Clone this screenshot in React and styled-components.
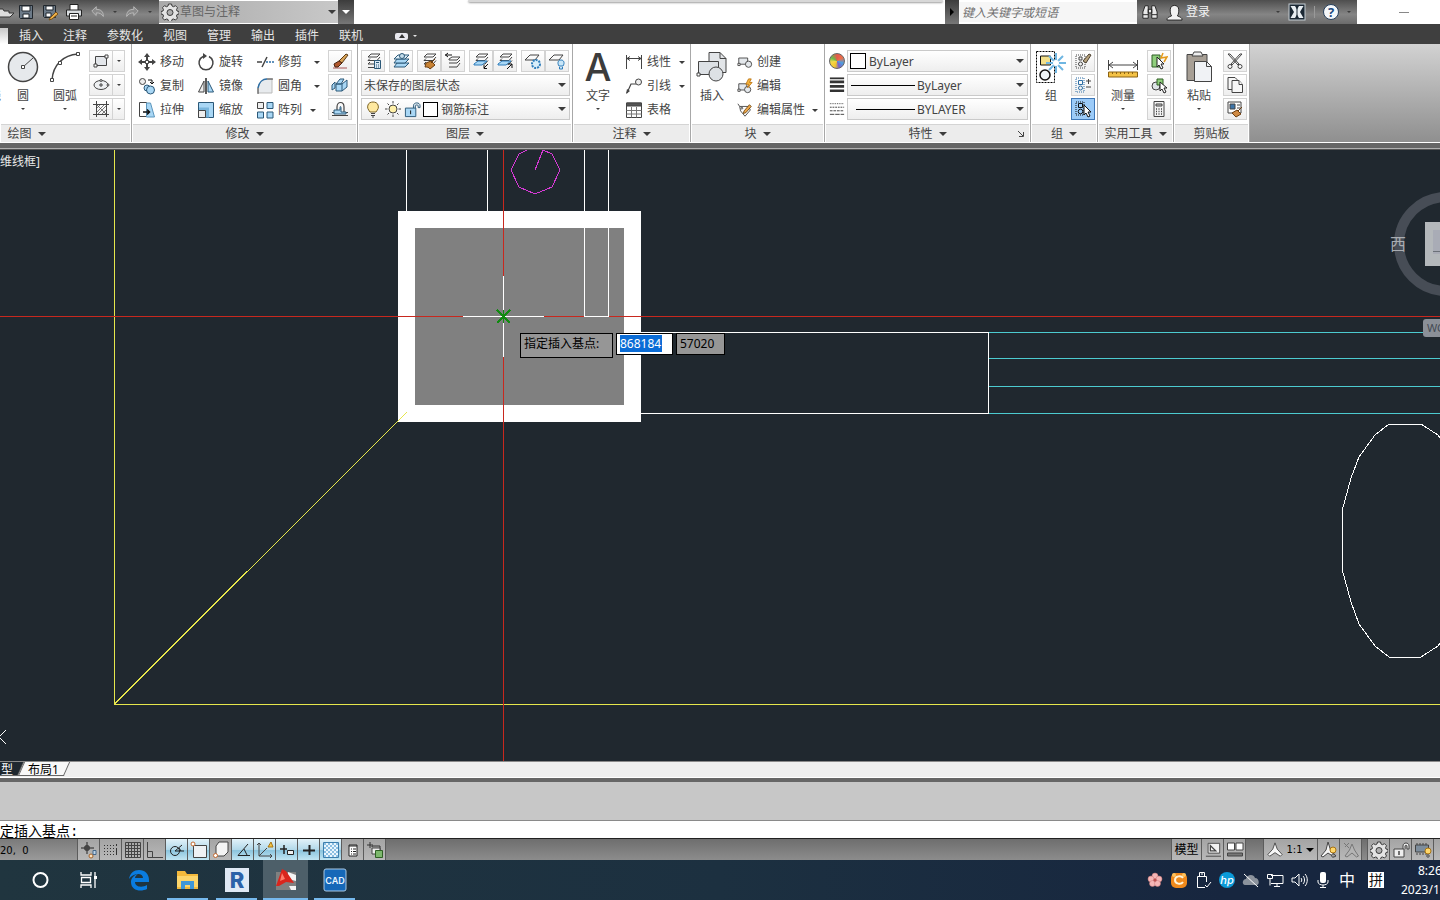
import React from "react";
import styled, { createGlobalStyle } from "styled-components";

const GlobalStyle = createGlobalStyle`
    * {
        box-sizing: border-box;
    }
    body {
        margin: 0;
        overflow: hidden;
        font-family: "Noto Sans", "Noto Sans CJK SC", sans-serif;
        font-size: 12px;
        line-height: 16px;
        color: #444444;
    }
    button, input, select {
        margin: 0;
        padding: 0;
        border: none;
        border-radius: 0;
        background: none;
        color: inherit;
        font: inherit;
        outline: none;
    }
`;

const Page = styled.div`
    display: flex;
    flex-direction: column;
    width: 100%;
    height: 100vh;
    overflow: hidden;
`;

const Svg = styled.svg`
    display: block;
    flex: none;
    fill: none;
    stroke: #444444;
`;

const Caret = styled.span`
    flex: none;
    width: 0;
    height: 0;
    border: ${(p) => p.$size || 4}px solid transparent;
    border-top-color: ${(p) => p.$color || "#3c3c3c"};
    border-bottom: none;
`;

/* ---------- icons ---------- */

const BLUE = "#a9d7f5";
const INK = "#2b5878";

const sheets = <path d="M4 5l3-3h9l-3 3zM4 8.500l2-2M4 8.500h9l3-3.500M4 12l2-2M4 12h9l3-3.500" />;

const icons = {
    open: <path d="M1 13V6h4l1 2h5v2h5l-4 4H2z" fill="#ddd" stroke="#333" />,
    save: (
        <g stroke="#20262c">
            <path d="M2.500 2.500h13v13h-12l-1-1z" fill="#6c7a88" />
            <path d="M5 3h8v5H5zM6 11h6v4H6z" fill="#fff" />
        </g>
    ),
    saveAs: (
        <g stroke="#20262c">
            <path d="M2.500 2.500h12v12h-11l-1-1z" fill="#6c7a88" />
            <path d="M5 3h7v4H5zM5 10h5v4H5z" fill="#fff" />
            <path d="M9 15l6-6 2 2-6 5-3 1z" fill="#efb24a" stroke="#7a5016" />
        </g>
    ),
    print: (
        <g stroke="#222">
            <path d="M5 7V1.500h8V7" fill="#fff" />
            <path d="M1.500 7h15v6h-15z" fill="#d9dde0" />
            <path d="M4.500 10.500h9v6h-9z" fill="#fff" />
            <path d="M6 13h6" />
        </g>
    ),
    undo: <path d="M2 8l5-5v3c6 0 8 3 8 8-2-3-4-4-8-4v3z" fill="#8a8a8a" stroke="#bdbdbd" />,
    redo: <path d="M16 8l-5-5v3C5 6 3 9 3 14c2-3 4-4 8-4v3z" fill="#8a8a8a" stroke="#bdbdbd" />,
    gear: (
        <g stroke="#3c3c3c">
            <path
                d="M7.500 1h3l.5 2 1.500.7 2-1 2 2-1 2 .5 1.300 2 .5v2.500l-2 .5-.5 1.500 1 2-2 2-2-1-1.500.5-.5 2h-3l-.5-2-1.500-.5-2 1-2-2 1-2-.5-1.500-2-.5V8.500l2-.5.5-1.300-1-2 2-2 2 1L7 3z"
                fill="#e4e4e4"
            />
            <circle cx="9" cy="9.500" r="3" fill="#b0b0b0" />
        </g>
    ),
    binoculars: (
        <g stroke="#1b1b1b" fill="#e9e9e9">
            <path d="M1 16V9l2.500-7H7v14zM17 16V9l-2.500-7H11v14zM7 6h4v4H7zM1 12h6M11 12h6" />
        </g>
    ),
    user: <path d="M1 17c0-3 2-3 5-4.500C4.500 11 4.500 8 4.500 6c0-6 9-6 9 0 0 2 0 5-1.500 6.500 3 1.500 5 1.500 5 4.500z" fill="#f1f1f1" stroke="#222" />,
    exchange: (
        <g>
            <rect x="1" y="1" width="16" height="16" fill="#1b2834" stroke="#c3ccd2" />
            <path d="M2.500 3h4.500l2 3.500L11 3h4.500l-3.500 6 3.500 6H11l-2-3.500L7 15H2.500L6 9z" fill="#e8eef2" stroke="none" />
            <path d="M9 4v10" stroke="#1b2834" />
        </g>
    ),
    rect: (
        <g>
            <path d="M3.500 4.500h11v9h-11z" fill="#e3e6ea" />
            <path d="M2 12h3v3H2zM13 3h3v3h-3z" fill="#fff" />
        </g>
    ),
    ellipse: (
        <g>
            <ellipse cx="9" cy="9" rx="7" ry="4.500" fill="#eef0f2" />
            <path d="M7 9h4M9 7v4" />
            <circle cx="16" cy="9" r="1" fill="#fff" />
            <circle cx="9" cy="4.500" r="1" fill="#fff" />
        </g>
    ),
    hatch: (
        <g>
            <path d="M1 4.500h16M1 14.500h16M4.500 1v16M14.500 1v16" />
            <path d="M5 8l3-3M5 12l7-7M6 14l8-8M10 14l4-4M5 5l9 9" strokeWidth="0.700" />
        </g>
    ),
    move: (
        <g>
            <path d="M9 3v4M9 11v4M3 9h4M11 9h4" strokeWidth="2" />
            <path d="M6 4l3-4 3 4zM6 14l3 4 3-4zM4 6L0 9l4 3zM14 6l4 3-4 3z" fill="#444" stroke="none" />
            <path d="M7.500 7.500h3v3h-3z" fill="#fff" />
        </g>
    ),
    rotate: (
        <g strokeWidth="1.500">
            <path d="M12 3.500A7 7 0 1 1 6 3.500" />
            <path d="M6 0l4 3-4 3z" fill="#444" stroke="none" />
        </g>
    ),
    trim: (
        <g strokeWidth="1.500">
            <path d="M1 9h5M6 14l5-10" />
            <path d="M10 9h2M13 9h2M16 9h2" stroke="#2e6fa5" />
        </g>
    ),
    copy: (
        <g>
            <circle cx="4.500" cy="4.500" r="3" fill="#eee" />
            <circle cx="9" cy="11" r="3" fill={BLUE} stroke={INK} />
            <circle cx="12.500" cy="13" r="4" fill={BLUE} stroke={INK} />
            <path d="M10 3h4v3M12 5l2 2 2-2" stroke="#111" />
        </g>
    ),
    mirror: (
        <g>
            <path d="M7 4v11H1.500z" fill="#eee" />
            <path d="M11 4v11h5.500z" fill={BLUE} stroke={INK} />
            <path d="M9 1v16" stroke="#222" strokeWidth="1.500" />
        </g>
    ),
    fillet: (
        <g>
            <path d="M2 16V11C3 5 7 2 11 2h5v14z" fill="#e8ebee" stroke="#bbb" />
            <path d="M2 11C3 5 7 2 11 2" stroke="#2e6fa5" strokeWidth="1.500" />
            <path d="M11 2h6M2 11v6" />
        </g>
    ),
    stretch: (
        <g>
            <path d="M1.500 1.500h7v14h-7z" fill="#fff" />
            <path d="M8.500 2h4l4 14h-8z" fill={BLUE} stroke="#5b96bd" />
            <path d="M5 11h6M9 8.500l2.500 2.500L9 13.500" stroke="#111" strokeWidth="1.500" />
        </g>
    ),
    scale: (
        <g>
            <path d="M1.500 1.500h15v15h-15z" fill={BLUE} stroke={INK} />
            <path d="M2 6.500h10v10H2z" fill="#78b5dc" stroke="none" />
            <path d="M1.500 9.500h7v7h-7z" fill="#eee" />
        </g>
    ),
    array: (
        <g fill={BLUE} stroke={INK}>
            <path d="M1.500 1.500h6v6h-6z" fill="#eee" stroke="#444" />
            <path d="M11 1.500h6v6h-6zM1.500 11h6v6h-6zM11 11h6v6h-6z" />
        </g>
    ),
    erase: (
        <g>
            <path d="M2 16h14" stroke="#a55" />
            <path d="M8 9l7-7 2 1-6 8z" fill="#d9a55a" stroke="#5b3a14" />
            <path d="M3 12l5-3 3 2-4 4H4z" fill="#b0562b" stroke="#4a2410" />
        </g>
    ),
    box: (
        <g fill={BLUE} stroke={INK}>
            <path d="M5 8l4-5h4l-3 5zM5 8h6v7H5zM11 8l5-4v7l-5 4M1 9l3-3v6l-3 2z" />
        </g>
    ),
    offset: (
        <g>
            <path d="M1 15.500h16M1 12.500h5V7c0-6 7-6 7 0v5.500h4" strokeWidth="1.200" />
            <path d="M3 14v-4h6V8c0-2 1-2 1 0v4h5v2z" fill={BLUE} stroke={INK} />
        </g>
    ),
    layerProps: (
        <g>
            {sheets}
            <path d="M4 15.500h6" />
            <path d="M10.500 8.500h6v8h-6z" fill="#dbe9f5" stroke={INK} />
            <path d="M12 10.500h3M12 13h1M14 13h1M12 15h1M14 15h1" stroke={INK} />
        </g>
    ),
    layerIso: (
        <g stroke={INK}>
            <path d="M2 15l3-4h12l-4 4z" fill={BLUE} />
            <path d="M2 11l3-4h12l-4 4z" fill={BLUE} />
            <path d="M2 7l4-4h11l-4 4z" fill="#dff0fa" />
            <circle cx="10" cy="4" r="2.500" fill="#c4ddec" />
        </g>
    ),
    layerMatch: (
        <g>
            {sheets}
            <path d="M11 11l4-4M6 11l5-2 4 4-5 4c-1-2-3-2-5-2z" fill="#c98334" stroke="#6b3d0f" />
        </g>
    ),
    layerPrev: (
        <g>
            <path d="M5 7l3-2h8l-3 3H5zM5 11h8l3-3M5 15h8l3-4" />
            <path d="M1 3h7M4 1L1.500 3 4 5" stroke="#111" />
        </g>
    ),
    layerOff: (
        <g>
            {sheets}
            <path d="M2 12l4-3h9l-5 4H2z" fill={BLUE} stroke="#2e7dbb" />
            <path d="M16 12l-4 4M12 13v3.500h3" stroke="#111" />
        </g>
    ),
    layerOn: (
        <g>
            {sheets}
            <path d="M2 12l4-3h9l-5 4H2z" fill={BLUE} stroke="#2e7dbb" />
            <path d="M11 17l5-5M12 12h4v4" stroke="#111" />
        </g>
    ),
    layerFreeze: (
        <g>
            <path d="M1 8l5-5h9l-4 5z" />
            <circle cx="12" cy="12" r="4" fill="#d8eefa" stroke="#2e7dbb" strokeDasharray="2 1" strokeWidth="2" />
        </g>
    ),
    layerBulb: (
        <g>
            <path d="M1 8l5-5h9l-4 5z" />
            <path d="M11 14c-2-3-1-6 2-6s4 3 2 6zM11.500 15v2h3v-2" fill="#c9e6f8" stroke="#2e7dbb" />
        </g>
    ),
    bulb: (
        <g>
            <path d="M6 12C4 9 3 8 4 5c1-4 9-4 10 0 1 3 0 4-2 7z" fill="#ffe9a0" stroke="#7d6526" />
            <path d="M7 13.500h4M7 15.500h4M8 17h2" />
        </g>
    ),
    sun: (
        <g stroke="#444">
            <circle cx="9" cy="9" r="4" fill="#fff0a8" />
            <path d="M9 1v2.500M9 14.500V17M1 9h2.500M14.500 9H17M3.500 3.500L5 5M13 13l1.500 1.500M3.500 14.500L5 13M13 5l1.500-1.500" />
        </g>
    ),
    unlock: (
        <g>
            <path d="M10 8V5c0-4 7-4 7 0v2h-2V5c0-1-3-1-3 0v3" fill="#dce8ef" stroke={INK} />
            <path d="M1.500 7.500h11v9h-11z" fill={BLUE} stroke={INK} />
            <path d="M7 10v4" stroke="#111" />
        </g>
    ),
    linear: <path d="M1.500 2v14M16.500 2v14M2 5.500h14M5 3.500L2 5.500l3 2M13 3.500l3 2-3 2" />,
    leader: (
        <g>
            <path d="M2 16l4-9h5" strokeWidth="1.200" />
            <circle cx="13.500" cy="5" r="3" fill="#eee" />
            <path d="M1 17l1-5 3 2z" fill="#444" stroke="none" />
        </g>
    ),
    table: (
        <g>
            <path d="M1.500 2h15v14.500h-15z" fill="#fff" />
            <path d="M1.500 2h15v3h-15z" fill="#555" />
            <path d="M1.500 9.500h15M1.500 13h15M6.500 6v10.500M11.500 6v10.500" stroke="#777" />
        </g>
    ),
    blockNew: (
        <g>
            <path d="M2 4.500h10v7H2z" fill="#e4e8ec" />
            <circle cx="13" cy="11.500" r="3.500" fill="#e4e8ec" />
            <path d="M1 10.500h2.500V13H1z" fill="#fff" />
        </g>
    ),
    blockEdit: (
        <g>
            <path d="M2 6.500h9v7H2z" fill="#e4e8ec" />
            <circle cx="12" cy="13" r="3.500" fill="#e4e8ec" />
            <path d="M1 12.500h2.500V15H1z" fill="#fff" />
            <path d="M13 1l-3 6h3l-1 4 5-6h-3l2-4z" fill="#f7b63e" stroke="#bd7410" />
        </g>
    ),
    attrEdit: (
        <g>
            <path d="M3 5h10l2 4-6 7-5-6z" fill="#fff" />
            <circle cx="5.500" cy="7" r="1" />
            <path d="M1 2l2 3" />
            <path d="M8 10l6-7 2 2-6 7-3 1z" fill="#f0a848" stroke="#6e4714" />
        </g>
    ),
    weights: (
        <g stroke="#333">
            <path d="M1 1.500h16" strokeWidth="2" />
            <path d="M1 5.500h16M1 10.500h16M1 15.500h16" strokeWidth="3" />
        </g>
    ),
    dashes: (
        <g stroke="#333">
            <path d="M1 3h16" strokeDasharray="1 1" />
            <path d="M1 7h16" strokeDasharray="2 1" />
            <path d="M1 11h16" strokeDasharray="3 1" />
            <path d="M1 15h16" strokeDasharray="5 1" />
        </g>
    ),
    groupEdit: (
        <g>
            <path d="M2 3h9v13H2z" strokeDasharray="1 1" />
            <path d="M5 5h3v3H5z" />
            <circle cx="6.500" cy="12" r="2" />
            <path d="M9 9l6-7 2 1-5 8z" fill="#b5a17c" stroke="#4b4030" />
        </g>
    ),
    groupAdd: (
        <g>
            <path d="M2 2h8v14H2z" stroke="#2e6fa5" strokeDasharray="1 1" />
            <path d="M4.500 4.500h4v4h-4z" stroke="#2e6fa5" />
            <circle cx="6.500" cy="12" r="2" stroke="#2e6fa5" />
            <path d="M12 5h5M14.500 3v5M12 11h5" />
        </g>
    ),
    groupSelect: (
        <g stroke="#111">
            <path d="M2 2h8v13H2z" strokeDasharray="1 1" />
            <path d="M4.500 3.500h4v4h-4z" />
            <circle cx="6.500" cy="11.500" r="2.300" />
            <path d="M10 5v10l2-2 2 4 2-1-2-4h3z" fill="#fff" />
        </g>
    ),
    quickSelect: (
        <g>
            <path d="M2 3h8v12H2z" fill="#8fcf7c" stroke="#2f5f24" />
            <path d="M13 1l-2 5 6-1-3 5" stroke="#e59a1b" strokeWidth="1.500" />
            <path d="M7 5v10l2-2 2 4 2-1-2-4h3z" fill="#fff" stroke="#222" />
        </g>
    ),
    selectSimilar: (
        <g>
            <circle cx="6" cy="10" r="4" fill="#dde3e7" />
            <path d="M7 3h6v6H7z" fill="#8fcf7c" stroke="#2f5f24" />
            <path d="M10 6v9l2-2 2 4 2-1-2-4h3z" fill="#fff" stroke="#222" />
        </g>
    ),
    calc: (
        <g>
            <path d="M4 1.500h10v15H4z" fill="#f3f3f3" />
            <path d="M6 4h6v2H6z" fill="#ccc" />
            <path d="M6 9h1M8.500 9h1M11 9h1M6 11.500h1M8.500 11.500h1M11 11.500h1M6 14h1M8.500 14h1M11 14h1" strokeWidth="1.500" />
        </g>
    ),
    cut: (
        <g>
            <path d="M2 2l2 0 9 10-1 1zM16 2l-2 0-9 10 1 1z" fill="#fff" />
            <circle cx="4" cy="14.500" r="2" fill="#fff" />
            <circle cx="14" cy="14.500" r="2" fill="#fff" />
        </g>
    ),
    pages: (
        <g fill="#f7f7f7">
            <path d="M2 1.500h7l2 2v10H2z" />
            <path d="M6 4.500h7l3.500 4v8H6z" />
            <path d="M13 4.500v4h3.500" />
        </g>
    ),
    matchProps: (
        <g>
            <path d="M2 2h13v11H2z" fill="#fff" />
            <path d="M4 4h5v5H4z" fill="#3d74a8" />
            <path d="M11 5h3M11 8h3" />
            <path d="M16 7l-4 4M6 13l5-3 4 4-5 3z" fill="#d08a43" stroke="#6b3d0f" />
        </g>
    ),
    snapInfer: (
        <g>
            <path d="M1 7h13M7 1v12M5 5h4v4H5z" stroke="#222" />
            <circle cx="11" cy="15" r="2" fill="#fbe3c0" stroke="#a3622a" />
            <path d="M13 9.500h3v4h-3z" fill="#bcd4ea" stroke="#46688a" />
        </g>
    ),
    snap: (
        <g stroke="#333">
            <path d="M2 4.500h10M2 7.500h10M2 10.500h10M2 13.500h10" strokeDasharray="1 2" />
            <path d="M14.500 3v2M14.500 7v7" />
        </g>
    ),
    grid: <path d="M1.500 1.500h15v15h-15zM4.500 1v16M7.500 1v16M10.500 1v16M13.500 1v16M1 4.500h16M1 7.500h16M1 10.500h16M1 13.500h16" />,
    ortho: <path d="M1.500 1v15.500H17M1.500 10.500h5v6" />,
    polar: (
        <g stroke="#222">
            <circle cx="7" cy="10" r="4.500" />
            <path d="M7 10l7-6M7 10h9M11 7l2 3" />
        </g>
    ),
    osnap: (
        <g>
            <path d="M3.500 4.500h13v12h-13z" fill="#eef1f4" />
            <circle cx="3" cy="3" r="2" fill="#fff" stroke="#c4692e" />
        </g>
    ),
    osnap3d: (
        <g>
            <path d="M4 5l3-4h9v10l-4 4H4z" fill="#f4f4f4" />
            <circle cx="3.500" cy="14.500" r="2" fill="#fff" stroke="#c4692e" />
        </g>
    ),
    track: <path d="M14 3L4 14.500h12M10 8l3 6" stroke="#222" />,
    ducs: (
        <g>
            <path d="M3 2v13h13M3 15l8-8M1 4l2-2 2 2M14 13l2 2-2 2" />
            <path d="M12 6l3-5 2 5z" fill="#f5c445" stroke="#a87412" />
        </g>
    ),
    dyn: (
        <g stroke="#222">
            <path d="M2 8h7M6 4v9" strokeWidth="1.500" />
            <path d="M9.500 9.500h6v4h-6z" fill="#eee" />
        </g>
    ),
    lwt: (
        <g stroke="#222">
            <path d="M3 9.500h12" strokeWidth="2" />
            <path d="M9.500 4v10" strokeWidth="2" />
        </g>
    ),
    transparency: (
        <g>
            <path d="M1.500 1.500h15v15h-15z" fill="#eaf6fd" stroke="#3c7fae" />
            <path d="M2 3h14M2 7h14M2 11h14M2 15h14" stroke="#8cbfe2" strokeWidth="2" strokeDasharray="2 2" />
            <path d="M4 5h12M4 9h12M4 13h12" stroke="#8cbfe2" strokeWidth="2" strokeDasharray="2 2" />
        </g>
    ),
    quickProps: (
        <g stroke="#222">
            <path d="M5 4h8v11H5z" fill="#fff" />
            <path d="M5 5h8M7 8h1M9 8h3M7 10.500h1M9 10.500h3M7 13h1M9 13h3" />
        </g>
    ),
    cycling: (
        <g>
            <path d="M1 4h6M4 1v6M6 6V5h8v7" stroke="#333" />
            <path d="M6 7h8v6H6z" fill="#eee" />
            <path d="M9.500 9.500h7v7h-7z" fill="#7cb86c" stroke="#2f5f24" />
        </g>
    ),
    modelSpace: (
        <g>
            <path d="M3.500 1.500h13v11h-13zM1 16h17" fill="#f2f2f2" />
            <path d="M6 4v6h6z" strokeWidth="1.500" />
        </g>
    ),
    quickView: (
        <g>
            <path d="M1.500 2h7v7h-7zM10 2h7v7h-7z" fill="#fff" />
            <path d="M1.500 12h15v3h-15z" fill="#777" />
        </g>
    ),
    annoScale: <path d="M9 1l2.500 7L17 14l-2 2-6-4-6 4-2-2 5.500-6z" fill="#f6f6f6" stroke="#444" />,
    annoVisible: (
        <g>
            <path d="M8 1l2.500 8L16 15l-2 1-6-4-5 4-2-1 5-6z" fill="#f6f6f6" />
            <circle cx="13" cy="9" r="3" fill="#ffd76b" stroke="#a87412" />
            <path d="M12 13h2v3h-2z" fill="#fff" />
        </g>
    ),
    annoAuto: <path d="M10 3l2.500 6 4 6-2 1-4.500-4L5 16l-2-1 4.500-6zM2 2l5 5M3 6l4-4" fill="#b4b4b4" stroke="#777" />,
    lockUi: (
        <g>
            <path d="M11 8V5c0-4 6-4 6 0v3h-2V5c0-1-2-1-2 0v3M2 8h10v8H2z" fill="#eee" />
            <path d="M7 10v4" strokeWidth="1.500" />
        </g>
    ),
    hardware: (
        <g>
            <path d="M1.500 4h13v7h-13z" fill="#7d8d9c" />
            <path d="M3 2v12M6 2v12M9 2v12M12 2v12" strokeDasharray="2 8" />
            <circle cx="14" cy="10" r="3" fill="#ffd76b" stroke="#a87412" />
            <path d="M13 14h2v2h-2z" fill="#fff" />
        </g>
    ),
};

function Icon({ name, size = 18 }) {
    return (
        <Svg width={size} height={size} viewBox="0 0 18 18" aria-hidden="true">
            {icons[name]}
        </Svg>
    );
}

/* ---------- title bar ---------- */

const TitleBar = styled.header`
    display: flex;
    flex: none;
    height: 24px;
    background: #ffffff;
`;
const QuickAccess = styled.div`
    display: flex;
    align-items: center;
    width: 159px;
    background: linear-gradient(#4e4e4e, #858585 60%, #6c6c6c);
`;
const QuickButton = styled.button`
    display: flex;
    justify-content: center;
    align-items: center;
    flex: none;
    width: ${(p) => p.$width || 24}px;
    height: 24px;
`;
const Workspace = styled.label`
    display: flex;
    align-items: center;
    width: 179px;
    margin: 1px 0;
    padding: 0 2px;
    gap: 1px;
    background: linear-gradient(90deg, #a9a9a9, #c8c8c8);
    color: #666666;

    select {
        flex: 1;
        min-width: 0;
        appearance: none;
    }
`;
const DarkButton = styled.button`
    display: flex;
    justify-content: center;
    align-items: center;
    flex: none;
    width: ${(p) => p.$width}px;
    background: linear-gradient(#3c3c3c, #777777);
`;
const TitleGap = styled.div`
    flex: 1;
    min-width: 0;
    padding: 0 2px 0 114px;

    &::before {
        content: "";
        display: block;
        height: 2px;
        border-radius: 0 0 4px 4px;
        background: #d8d8d8;
        box-shadow: 0 1px 2px #999999;
    }
`;
const Search = styled.input`
    flex: none;
    width: 178px;
    margin: 2px 0;
    padding: 2px 0 0 3px;
    background: #f6f6f6;
    font-style: italic;

    &::placeholder {
        color: #707070;
    }
`;
const Account = styled.div`
    display: flex;
    align-items: center;
    flex: none;
    width: 220px;
    padding: 0 6px 0 1px;
    background: linear-gradient(#4e4e4e, #858585 60%, #6c6c6c);
    color: #f4f4f4;
`;
const SignIn = styled.button`
    display: flex;
    align-items: center;
    justify-content: space-between;
    flex: 1;
    padding-right: 8px;
`;
const HelpMark = styled.button`
    width: 16px;
    height: 16px;
    margin: 0 8px 0 8px;
    border: 1px solid #27405c;
    border-radius: 8px;
    background: #f4f7fa;
    color: #1c4a80;
    font-size: 13px;
    font-weight: 700;
    line-height: 14px;
`;
const Divider = styled.span`
    width: 1px;
    height: 12px;
    margin-left: 8px;
    background: #999999;
`;
const WindowControls = styled.div`
    display: flex;
    flex: none;
    width: 83px;
    padding-left: 42px;

    button {
        width: 10px;
        height: 1px;
        margin-top: 12px;
        background: #888888;
    }
`;

function Title() {
    return (
        <TitleBar>
            <QuickAccess>
                <QuickButton aria-label="打开" $width={14}>
                    <Icon name="open" />
                </QuickButton>
                <QuickButton aria-label="保存"><Icon name="save" /></QuickButton>
                <QuickButton aria-label="另存为"><Icon name="saveAs" /></QuickButton>
                <QuickButton aria-label="打印"><Icon name="print" /></QuickButton>
                <QuickButton aria-label="放弃"><Icon name="undo" size={16} /></QuickButton>
                <QuickButton aria-label="放弃列表" $width={10}><Caret $size={2} /></QuickButton>
                <QuickButton aria-label="重做"><Icon name="redo" size={16} /></QuickButton>
                <QuickButton aria-label="重做列表" $width={12}><Caret $size={2} /></QuickButton>
            </QuickAccess>
            <Workspace>
                <Icon name="gear" />
                <select aria-label="工作空间" defaultValue="draft">
                    <option value="draft">草图与注释</option>
                </select>
                <Caret />
            </Workspace>
            <DarkButton $width={16} aria-label="自定义"><Caret $color="#ffffff" /></DarkButton>
            <TitleGap />
            <DarkButton $width={14} aria-label="展开搜索">
                <Svg width="6" height="8" viewBox="0 0 6 8"><path d="M1 0l4 4-4 4z" fill="#000" stroke="none" /></Svg>
            </DarkButton>
            <Search aria-label="搜索" placeholder="键入关键字或短语" />
            <Account>
                <QuickButton aria-label="搜索"><Icon name="binoculars" size={16} /></QuickButton>
                <QuickButton aria-label="用户"><Icon name="user" size={17} /></QuickButton>
                <SignIn>
                    登录
                    <Caret $size={2} />
                </SignIn>
                <Icon name="exchange" />
                <Divider />
                <HelpMark aria-label="帮助">?</HelpMark>
                <Caret $size={2} />
            </Account>
            <WindowControls><button aria-label="最小化" /></WindowControls>
        </TitleBar>
    );
}

/* ---------- ribbon tabs ---------- */

const TabBar = styled.nav`
    display: flex;
    align-items: center;
    flex: none;
    gap: 20px;
    height: 20px;
    padding-top: 4px;
    background: #3f3f3f;
    color: #e6e6e6;
`;
const ActiveTab = styled.button`
    width: 8px;
    height: 16px;
    margin-right: -9px;
    background: linear-gradient(#c8c8c8, #ffffff);
`;
const RibbonTab = styled.button`
    white-space: nowrap;
`;
const RibbonToggle = styled.button`
    display: flex;
    align-items: center;
    gap: 5px;
    height: 12px;
    margin-left: 12px;

    span:first-child {
        display: flex;
        justify-content: center;
        align-items: center;
        width: 13px;
        height: 7px;
        border-radius: 2px;
        background: #e8e8ee;
    }
`;

const tabs = ["插入", "注释", "参数化", "视图", "管理", "输出", "插件", "联机"];

/* ---------- ribbon ---------- */

const Ribbon = styled.section`
    display: flex;
    flex: none;
    border-bottom: 1px solid #ffffff;
    background: linear-gradient(#d2d2d2, #8f8f8f);
`;
const Panel = styled.div`
    display: flex;
    flex-direction: column;
    flex: none;
    width: ${(p) => p.$width}px;
    border-right: 1px solid #a8a8a8;
    background: #ffffff;
`;
const PanelBody = styled.div`
    display: flex;
    justify-content: ${(p) => (p.$end ? "flex-end" : "flex-start")};
    height: 80px;
    padding: 5px ${(p) => p.$right || 2}px 3px ${(p) => p.$left || 0}px;
    overflow: hidden;
`;
const PanelLabel = styled.button`
    display: flex;
    justify-content: center;
    align-items: center;
    position: relative;
    gap: 6px;
    height: 18px;
    margin: 0 1px;
    padding-right: ${(p) => p.$shift || 0}px;
    border-top: 1px solid #d4d4d4;
    background: #ececec;
`;
const Launcher = styled(Svg)`
    position: absolute;
    right: 5px;
    bottom: 5px;
`;
const BigButton = styled.button`
    display: flex;
    flex-direction: column;
    align-items: center;
    flex: none;
    width: ${(p) => p.$width || 42}px;
    white-space: nowrap;
`;
const BigPicture = styled.span`
    display: flex;
    justify-content: center;
    align-items: center;
    height: 36px;
    margin-bottom: 3px;
`;
const BigLetter = styled.span`
    color: #3c3c3c;
    font-family: Inter, sans-serif;
    font-size: 38px;
    font-weight: 500;
    line-height: 36px;
`;
const BigCaret = styled(Caret)`
    margin-top: 4px;
`;
const Column = styled.div`
    display: flex;
    flex-direction: column;
    flex: ${(p) => (p.$grow ? 1 : "none")};
    width: ${(p) => (p.$width ? p.$width + "px" : "auto")};
    min-width: 0;
    padding-left: ${(p) => p.$indent || 0}px;
`;
const Tool = styled.button`
    display: flex;
    align-items: center;
    gap: 4px;
    height: 24px;
    padding-top: 2px;
    white-space: nowrap;
`;
const ToolCaret = styled(Caret)`
    margin-left: ${(p) => p.$gap || 6}px;
`;
const SmallStack = styled.div`
    display: grid;
    flex: none;
    align-content: start;
    gap: 2px;
    margin-left: ${(p) => p.$gap || 0}px;
    padding-top: 1px;
`;
const SmallButton = styled.button`
    display: flex;
    justify-content: center;
    align-items: center;
    width: 24px;
    height: 22px;
    border: 1px solid ${(p) => (p.$on ? "#3f78b8" : "#d3d3d3")};
    background: ${(p) => (p.$on ? "#9ccbf8" : "linear-gradient(#ffffff, #eeeeee)")};

    & + & {
        border-left-width: ${(p) => (p.$joined ? 0 : 1)}px;
    }
`;
const SplitButton = styled.div`
    display: grid;
    grid-template-columns: 24px 12px;

    button + button {
        width: 12px;
        border-left: none;
    }
`;
const ButtonRow = styled.div`
    display: flex;
    gap: 4px;
    height: 24px;
    padding-top: 1px;
`;
const Joined = styled.div`
    display: flex;
`;
const SelectBox = styled.label`
    display: flex;
    align-items: center;
    flex: 1;
    gap: 2px;
    height: 22px;
    margin: 1px 0;
    padding: 0 3px 0 2px;
    border: 1px solid #cacaca;
    background: linear-gradient(#ffffff, #eeeeee);

    select {
        flex: 1;
        min-width: 0;
        height: 18px;
        padding-top: 1px;
        appearance: none;
    }
`;
const Swatch = styled.span`
    flex: none;
    width: ${(p) => p.$size}px;
    height: ${(p) => p.$size}px;
    margin-right: 1px;
    border: 1px solid #000000;
    background: #ffffff;
`;
const LineSample = styled.span`
    flex: none;
    width: ${(p) => p.$width}px;
    height: 1px;
    margin-left: ${(p) => 65 - p.$width}px;
    background: #000000;
`;
const PropRow = styled.div`
    display: flex;
    align-items: center;
    gap: 2px;
    height: 24px;
`;
const ColorWheel = styled.span`
    width: 16px;
    height: 16px;
    border: 1px solid #666666;
    border-radius: 8px;
    background: conic-gradient(#e8574a, #e9704a 60deg, #4c9fe0 110deg, #7a62c9 160deg, #f2c62f 200deg, #f4d94a 260deg, #67bd4c 300deg, #e8574a);
`;

function RibbonPanel({ width, label, labelShift, caret = true, launcher, children, ...body }) {
    return (
        <Panel $width={width}>
            <PanelBody {...body}>{children}</PanelBody>
            <PanelLabel $shift={labelShift}>
                {label}
                {caret && <Caret />}
                {launcher && (
                    <Launcher width="6" height="6" viewBox="0 0 6 6">
                        <path d="M0 0l5 5M5.500 1v4.500H1" />
                    </Launcher>
                )}
            </PanelLabel>
        </Panel>
    );
}

function ToolButton({ icon, label, caret, size }) {
    return (
        <Tool>
            <Icon name={icon} size={size} />
            {label}
            {caret && <ToolCaret $size={3} $gap={caret} />}
        </Tool>
    );
}

function DropSelect({ label, value, children }) {
    return (
        <SelectBox>
            {children}
            <select aria-label={label} defaultValue={value}>
                <option value={value}>{value}</option>
            </select>
            <Caret />
        </SelectBox>
    );
}

function IconStack({ names, on }) {
    return (
        <SmallStack>
            {names.map((name) => (
                <SmallButton key={name} $on={name === on} aria-label={name}>
                    <Icon name={name} />
                </SmallButton>
            ))}
        </SmallStack>
    );
}

function RibbonPanels() {
    return (
        <Ribbon>
            <RibbonPanel width={132} label="绘图" labelShift={78} $end $right={6}>
                <BigButton $width={38}>
                    <BigPicture />
                    多段线
                </BigButton>
                <BigButton>
                    <BigPicture>
                        <Svg width="32" height="32" viewBox="0 0 32 32">
                            <circle cx="16" cy="16" r="14.500" fill="#e6e9ec" strokeWidth="1.500" />
                            <path d="M16 16L26 7" />
                            <path d="M14.500 14.500h3v3h-3z" fill="#fff" />
                        </Svg>
                    </BigPicture>
                    圆
                    <BigCaret $size={2} />
                </BigButton>
                <BigButton>
                    <BigPicture>
                        <Svg width="32" height="32" viewBox="0 0 32 32">
                            <path d="M3 29C4 14 14 4 29 3" strokeWidth="1.500" />
                            <path d="M1.500 27.500h3v3h-3zM9.500 10.500h3v3h-3zM27.500 1.500h3v3h-3z" fill="#fff" />
                        </Svg>
                    </BigPicture>
                    圆弧
                    <BigCaret $size={2} />
                </BigButton>
                <SmallStack $gap={3}>
                    {["rect", "ellipse", "hatch"].map((name) => (
                        <SplitButton key={name}>
                            <SmallButton aria-label={name}><Icon name={name} /></SmallButton>
                            <SmallButton aria-label={name + " 列表"}><Caret $size={2} /></SmallButton>
                        </SplitButton>
                    ))}
                </SmallStack>
            </RibbonPanel>

            <RibbonPanel width={226} label="修改" $left={6} $right={5}>
                <Column $width={59}>
                    <ToolButton icon="move" label="移动" />
                    <ToolButton icon="copy" label="复制" />
                    <ToolButton icon="stretch" label="拉伸" />
                </Column>
                <Column $width={59}>
                    <ToolButton icon="rotate" label="旋转" />
                    <ToolButton icon="mirror" label="镜像" />
                    <ToolButton icon="scale" label="缩放" />
                </Column>
                <Column $grow>
                    <ToolButton icon="trim" label="修剪" caret={8} />
                    <ToolButton icon="fillet" label="圆角" caret={8} />
                    <ToolButton icon="array" label="阵列" caret={4} />
                </Column>
                <IconStack names={["erase", "box", "offset"]} />
            </RibbonPanel>

            <RibbonPanel width={215} label="图层" $left={3} $right={2}>
                <Column $grow>
                    <ButtonRow>
                        <SmallButton aria-label="图层特性"><Icon name="layerProps" /></SmallButton>
                        <SmallButton aria-label="置为当前"><Icon name="layerIso" /></SmallButton>
                        <Joined>
                            <SmallButton aria-label="匹配"><Icon name="layerMatch" /></SmallButton>
                            <SmallButton $joined aria-label="上一个"><Icon name="layerPrev" /></SmallButton>
                        </Joined>
                        <Joined>
                            <SmallButton aria-label="隔离"><Icon name="layerOff" /></SmallButton>
                            <SmallButton $joined aria-label="取消隔离"><Icon name="layerOn" /></SmallButton>
                        </Joined>
                        <Joined>
                            <SmallButton aria-label="冻结"><Icon name="layerFreeze" /></SmallButton>
                            <SmallButton $joined aria-label="关闭"><Icon name="layerBulb" /></SmallButton>
                        </Joined>
                    </ButtonRow>
                    <DropSelect label="图层状态" value="未保存的图层状态" />
                    <DropSelect label="图层" value="钢筋标注">
                        <Icon name="bulb" />
                        <Icon name="sun" />
                        <Icon name="unlock" size={17} />
                        <Swatch $size={15} />
                    </DropSelect>
                </Column>
            </RibbonPanel>

            <RibbonPanel width={118} label="注释" $left={2}>
                <BigButton $width={46}>
                    <BigPicture><BigLetter>A</BigLetter></BigPicture>
                    文字
                    <BigCaret $size={2} />
                </BigButton>
                <Column $grow $indent={4}>
                    <ToolButton icon="linear" label="线性" caret={4} />
                    <ToolButton icon="leader" label="引线" caret={4} />
                    <ToolButton icon="table" label="表格" />
                </Column>
            </RibbonPanel>

            <RibbonPanel width={134} label="块">
                <BigButton>
                    <BigPicture>
                        <Svg width="32" height="32" viewBox="0 0 32 32">
                            <path d="M13 1.500h11l6 6v14H13z" fill="#e2e5e8" />
                            <path d="M24 1.500v6h6" />
                            <path d="M2.500 10.500h20v13h-20z" fill="#dde1e5" />
                            <path d="M1 22h3v3H1z" fill="#fff" />
                            <circle cx="20" cy="23" r="7" fill="#dde1e5" />
                        </Svg>
                    </BigPicture>
                    插入
                </BigButton>
                <Column $grow $indent={4}>
                    <ToolButton icon="blockNew" label="创建" size={16} />
                    <ToolButton icon="blockEdit" label="编辑" size={16} />
                    <ToolButton icon="attrEdit" label="编辑属性" size={16} caret={3} />
                </Column>
            </RibbonPanel>

            <RibbonPanel width={206} label="特性" launcher $left={4}>
                <Column $grow>
                    <PropRow>
                        <ColorWheel />
                        <DropSelect label="颜色" value="ByLayer"><Swatch $size={16} /></DropSelect>
                    </PropRow>
                    <PropRow>
                        <Icon name="weights" size={16} />
                        <DropSelect label="线宽" value="ByLayer"><LineSample $width={64} /></DropSelect>
                    </PropRow>
                    <PropRow>
                        <Icon name="dashes" size={16} />
                        <DropSelect label="线型" value="BYLAYER"><LineSample $width={59} /></DropSelect>
                    </PropRow>
                </Column>
            </RibbonPanel>

            <RibbonPanel width={67} label="组">
                <BigButton $width={40}>
                    <BigPicture>
                        <Svg width="32" height="34" viewBox="0 0 32 34">
                            <path d="M1.500 1.500h18v31h-18z" stroke="#000" strokeDasharray="2 1" />
                            <path d="M5.500 6h10v9h-10z" fill="#f3e08a" stroke="#111" />
                            <circle cx="10" cy="25" r="5" fill="#eef4f8" stroke="#111" strokeWidth="1.500" />
                            <path d="M21 3v20M11 13h20M14 6l14 14M28 6L14 20" stroke="#6fb6e2" strokeWidth="2" />
                            <circle cx="21" cy="13" r="3" fill="#ffffff" stroke="none" />
                        </Svg>
                    </BigPicture>
                    组
                </BigButton>
                <IconStack names={["groupEdit", "groupAdd", "groupSelect"]} on="groupSelect" />
            </RibbonPanel>

            <RibbonPanel width={76} label="实用工具" $end>
                <BigButton $width={48}>
                    <BigPicture>
                        <Svg width="32" height="32" viewBox="0 0 32 32">
                            <path d="M1.500 9v10M30.500 9v10M2 14h28M6 11l-4 3 4 3M26 11l4 3-4 3" />
                            <path d="M1.500 21h29v5h-29z" fill="#f4c246" stroke="#8b6212" />
                            <path d="M5.500 21v2M9.500 21v2M13.500 21v2M17.500 21v2M21.500 21v2M25.500 21v2" stroke="#8b6212" />
                        </Svg>
                    </BigPicture>
                    测量
                    <BigCaret $size={2} />
                </BigButton>
                <IconStack names={["quickSelect", "selectSimilar", "calc"]} />
            </RibbonPanel>

            <RibbonPanel width={76} label="剪贴板" caret={false} $end>
                <BigButton $width={48}>
                    <BigPicture>
                        <Svg width="32" height="32" viewBox="0 0 32 32">
                            <path d="M4 3.500h20v26H4z" fill="#a79f95" />
                            <path d="M9 5l2-4h7l2 4z" fill="#eee" />
                            <path d="M11.500 10.500h12l5 5v15h-17z" fill="#f0f2f5" />
                            <path d="M23.500 10.500v5h5" />
                        </Svg>
                    </BigPicture>
                    粘贴
                    <BigCaret $size={2} />
                </BigButton>
                <IconStack names={["cut", "pages", "matchProps"]} />
            </RibbonPanel>
        </Ribbon>
    );
}

const Bevel = styled.div`
    flex: none;
    height: ${(p) => p.$height}px;
    border-bottom: ${(p) => (p.$lined ? "1px solid #555555" : "none")};
    background: ${(p) => (p.$lined ? "linear-gradient(#666666 5px, #b0b0b0 5px)" : "#666666")};
`;

/* ---------- drawing area ---------- */

const Canvas = styled.main`
    position: relative;
    flex: 1;
    min-height: 0;
    overflow: hidden;
    background: #20282f;
`;
const Drawing = styled(Svg)`
    width: 100%;
    height: 100%;
    shape-rendering: crispEdges;
    stroke: #ffffff;
`;
const ViewLabel = styled.button`
    position: absolute;
    top: 4px;
    left: 0;
    color: #e8e8e8;
`;
const Prompt = styled.div`
    display: flex;
    align-items: flex-start;
    position: absolute;
    top: 183px;
    left: 520px;
    gap: 3px;
    color: #000000;
`;
const PromptLabel = styled.label`
    width: 93px;
    height: 25px;
    padding: 2px 3px;
    border: 1px solid #000000;
    background: #969696;
`;
const CoordInput = styled.input`
    width: ${(p) => p.$width}px;
    height: 22px;
    padding: 0 3px 2px;
    border: 1px solid #000000;
    background: ${(p) =>
        p.$selected
            ? "linear-gradient(#0a6cd6, #0a6cd6) 3px 1px / 42px 17px no-repeat #ffffff"
            : "#969696"};
    color: ${(p) => (p.$selected ? "#ffffff" : "#000000")};
`;
const ViewCube = styled.div`
    position: absolute;
    top: 40px;
    right: 0;
    width: 50px;
    height: 150px;
    overflow: hidden;
    color: #a9adb2;
    font-size: 16px;
`;
const West = styled.span`
    position: absolute;
    top: 46px;
    left: 0;
`;
const Wcs = styled.button`
    position: absolute;
    top: 129px;
    left: 33px;
    width: 44px;
    height: 18px;
    padding-left: 4px;
    border-radius: 3px;
    background: #8b9098;
    color: #454b54;
    font-size: 11px;
    text-align: left;
`;

function DrawingArea() {
    return (
        <Canvas>
            <Drawing>
                <path d="M406.500 0v61M487.500 0v61M584.500 0v61M608.500 0v61" />
                <path d="M527 0L519 4 511 20 519 37 535 44 552 37 560 20 552 4 543 0 535 20" stroke="#d63ad6" />
                <rect x="398" y="61" width="243" height="211" fill="#ffffff" stroke="none" />
                <rect x="415" y="78" width="209" height="177" fill="#808080" stroke="none" />
                <path d="M641 182.500h347.500v81H641" />
                <g fill="#4ccbd0" stroke="none">
                    <rect x="989" y="182" width="100%" height="1" />
                    <rect x="989" y="208" width="100%" height="1" />
                    <rect x="989" y="236" width="100%" height="1" />
                    <rect x="989" y="263" width="100%" height="1" />
                </g>
                <path d="M114.500 0v554L407 262" stroke="#e6e64c" />
                <rect x="114" y="554" width="100%" height="1" fill="#e6e64c" stroke="none" />
                <path d="M1389 274h32l17 11 16 22 8 21 9 33v58l-9 33-8 22-16 22-17 11h-32l-14-11-16-22-8-22-9-33v-58l9-33 8-21 16-22z" />
                <g fill="#c8281e" stroke="none">
                    <rect x="0" y="166" width="100%" height="1" />
                    <rect x="503" y="0" width="1" height="100%" />
                </g>
                <path d="M584.500 78v88.500h24V78M463 166.500h81M503.500 126v81" />
                <path d="M497 160l13 13M510 160l-13 13" stroke="#118a11" strokeWidth="2" />
                <path d="M503.500 160v13" stroke="#118a11" />
                <path d="M6 580l-7 7 7 7" />
            </Drawing>
            <ViewLabel>维线框]</ViewLabel>
            <ViewCube>
                <Svg width="110" height="110" viewBox="0 0 110 110">
                    <circle cx="56" cy="54" r="47" stroke="#474d56" strokeWidth="10" />
                    <rect x="35" y="32" width="44" height="44" fill="#b4b8bb" stroke="none" />
                    <rect x="43" y="40" width="30" height="24" fill="#a9acb6" stroke="none" />
                    <path d="M43 61.500h30" stroke="#6b7078" />
                </Svg>
                <West>西</West>
                <Wcs>WCS</Wcs>
            </ViewCube>
            <Prompt>
                <PromptLabel htmlFor="coord-x">指定插入基点:</PromptLabel>
                <CoordInput id="coord-x" $width={57} $selected defaultValue="868184" />
                <CoordInput aria-label="Y" $width={49} defaultValue="57020" />
            </Prompt>
        </Canvas>
    );
}

/* ---------- layout tabs, command line and status bar ---------- */

const LayoutBar = styled.div`
    display: flex;
    flex: none;
    height: 17px;
    border-top: 1px solid #8a8a8a;
    border-bottom: 1px solid #ffffff;
    background: #efefef;
    color: #000000;
    line-height: 15px;
`;
const LayoutTab = styled.button`
    position: relative;
    z-index: 0;
    width: ${(p) => p.$width}px;
    height: 14px;
    padding-left: ${(p) => p.$pad}px;
    color: ${(p) => (p.$dark ? "#ffffff" : "#000000")};
    text-align: left;

    &::before {
        content: "";
        position: absolute;
        z-index: -1;
        inset: 0 0 0 ${(p) => (p.$dark ? -8 : 0)}px;
        border: 1px solid #666666;
        border-top: none;
        background: ${(p) => (p.$dark ? "#20282f" : "#f8f8f8")};
        transform: skewX(-24deg);
    }
`;
const History = styled.div`
    flex: none;
    height: 39px;
    border-bottom: 1px solid #8a8a8a;
    background: #c7c7c7;
`;
const CommandInput = styled.input`
    flex: none;
    width: 100%;
    height: 17px;
    padding-top: 1px;
    background: #ffffff;
    color: #000000;
    font-family: "Liberation Mono", "Noto Sans CJK SC", monospace;
    font-size: 14px;
    line-height: 16px;
`;
const StatusBar = styled.footer`
    display: flex;
    flex: none;
    height: 22px;
    border-top: 1px solid #222222;
    background: linear-gradient(#6e6e6e, #8c8c8c);
    color: #000000;
`;
const Coords = styled.div`
    width: 77px;
    padding-top: 4px;
    background: linear-gradient(#7a7a7a, #9a9a9a);
    font-family: "DejaVu Sans", sans-serif;
    font-size: 10px;
    white-space: pre;
`;
const Toggle = styled.button`
    display: flex;
    justify-content: center;
    align-items: center;
    flex: none;
    gap: 3px;
    width: ${(p) => p.$width || 22}px;
    border-left: 1px solid #5c5c5c;
    background: ${(p) =>
        p.$on
            ? "linear-gradient(#e2f2f9, #b3d9ea 50%, #8cc5de 55%, #c2e6f3)"
            : "linear-gradient(#a4a4a4, #b9b9b9)"};
`;
const Scale = styled.span`
    font-family: "DejaVu Sans", sans-serif;
    font-size: 10px;
`;
const Spacer = styled.div`
    flex: ${(p) => (p.$width ? "none" : 1)};
    width: ${(p) => p.$width}px;
    border-left: 1px solid #5c5c5c;
`;

const toggles = [
    ["snapInfer"],
    ["snap"],
    ["grid"],
    ["ortho"],
    ["polar", true],
    ["osnap", true],
    ["osnap3d"],
    ["track", true],
    ["ducs", true],
    ["dyn", true],
    ["lwt", true],
    ["transparency", true],
    ["quickProps"],
    ["cycling"],
];

function Status() {
    return (
        <StatusBar>
            <Coords>20,  0</Coords>
            {toggles.map(([name, on]) => (
                <Toggle key={name} $on={on} aria-label={name} aria-pressed={!!on}>
                    <Icon name={name} />
                </Toggle>
            ))}
            <Spacer />
            <Toggle $width={30}>模型</Toggle>
            <Toggle aria-label="布局"><Icon name="modelSpace" size={16} /></Toggle>
            <Toggle aria-label="快速查看"><Icon name="quickView" /></Toggle>
            <Spacer $width={18} />
            <Toggle $width={54}>
                <Icon name="annoScale" size={16} />
                <Scale>1:1</Scale>
                <Caret $color="#000000" />
            </Toggle>
            <Toggle aria-label="注释可见性"><Icon name="annoVisible" /></Toggle>
            <Toggle aria-label="自动缩放"><Icon name="annoAuto" /></Toggle>
            <Spacer $width={6} />
            <Toggle aria-label="切换工作空间"><Icon name="gear" /></Toggle>
            <Toggle aria-label="锁定"><Icon name="lockUi" /></Toggle>
            <Toggle aria-label="硬件加速"><Icon name="hardware" /></Toggle>
            <Toggle $width={7} aria-label="更多" />
        </StatusBar>
    );
}

/* ---------- windows taskbar ---------- */

const Taskbar = styled.footer`
    display: flex;
    flex: none;
    height: 40px;
    padding-left: 16px;
    background: linear-gradient(90deg, #20353f, #1c3040 50%, #17263f 85%);
    color: #ffffff;
`;
const TaskItem = styled.button`
    display: flex;
    justify-content: center;
    align-items: center;
    width: 49px;
    background: ${(p) => (p.$active ? "#4d5f69" : "none")};
    background-clip: padding-box;
    border: 0 solid transparent;
    border-width: 0 ${(p) => (p.$active ? 2 : 4)}px;
    box-shadow: ${(p) => (p.$open ? "inset 0 -2px #76b9ed" : "none")};
`;
const Tray = styled.div`
    display: flex;
    align-items: center;
    margin-left: auto;
`;
const TrayItem = styled.button`
    display: flex;
    justify-content: center;
    align-items: center;
    width: ${(p) => p.$width || 24}px;
    font-size: 16px;
`;
const Pinyin = styled.span`
    width: 16px;
    height: 16px;
    background: #ffffff;
    color: #111111;
    font-size: 14px;
    line-height: 16px;
`;
const Clock = styled.div`
    width: 47px;
    padding-left: 8px;
    overflow: hidden;
    line-height: 19px;
    white-space: nowrap;

    time {
        display: block;
    }
    time:first-child {
        padding-left: 17px;
    }
`;
const LogoText = styled.text`
    fill: ${(p) => p.$color};
    stroke: none;
    font-family: Inter, sans-serif;
    font-size: ${(p) => p.$size}px;
    font-style: ${(p) => (p.$italic ? "italic" : "normal")};
    font-weight: ${(p) => p.$weight || 700};
    text-anchor: middle;
`;

function Task({ label, active, open, children }) {
    return (
        <TaskItem aria-label={label} $active={active} $open={open}>
            <Svg width="24" height="24" viewBox="0 0 24 24">
                {children}
            </Svg>
        </TaskItem>
    );
}

function TrayIcon({ label, children }) {
    return (
        <TrayItem aria-label={label}>
            <Svg width="18" height="18" viewBox="0 0 18 18">
                {children}
            </Svg>
        </TrayItem>
    );
}

function WindowsBar() {
    return (
        <Taskbar>
            <Task label="Cortana">
                <circle cx="11.500" cy="12" r="7" stroke="#ffffff" strokeWidth="2" />
            </Task>
            <Task label="任务视图">
                <path d="M3 4v3h10V4M3 20v-3h10v3M3.500 9.500h9v5h-9zM17 4v16" stroke="#ffffff" strokeWidth="1.300" />
                <path d="M16 8h3v3h-3z" fill="#ffffff" stroke="none" />
            </Task>
            <Task label="Edge">
                <path
                    d="M2 11C3 5 7 2 12 2c6 0 10 4 10 10v2H8c0 5 7 6 12 3v4c-6 3-16 2-16-7 0-4 3-7 7-8-2 1-3 3-3 4h8c0-6-10-5-14 1z"
                    fill="#0a7ce0"
                    stroke="none"
                />
            </Task>
            <Task label="文件资源管理器" open>
                <path d="M1 3h8l2 3h11v15H1z" fill="#f3b93c" stroke="none" />
                <path d="M1 8h21v11H1z" fill="#fcd56b" stroke="none" />
                <path d="M5 21v-8h13v8h-4v-4H9v4z" fill="#3f97d8" stroke="none" />
            </Task>
            <Task label="Revit" open>
                <path d="M0 0h24v24H0z" fill="#dfe9f5" stroke="none" />
                <LogoText x="12" y="20" $size={22} $weight={800} $color="#2c62a8">R</LogoText>
            </Task>
            <Task label="AutoCAD" active open>
                <path d="M2 4h20v18H2z" fill="#808080" stroke="none" />
                <path d="M14 4l8 3v6l-8-2zM15 18h7v4h-5z" fill="#f4f4f4" stroke="none" />
                <path d="M2 18L8 1l4 2 8 12-8-1-7 4z" fill="#d9251d" stroke="none" />
                <path d="M8 5l-2 8 5-2z" fill="#ff7b6b" stroke="none" />
            </Task>
            <Task label="CAD" open>
                <rect x="1" y="1" width="22" height="22" rx="2" fill="#1668b8" stroke="#a8c8e4" />
                <LogoText x="12" y="16" $size={9} $weight={600} $color="#e8f4ff">CAD</LogoText>
            </Task>
            <Tray>
                <TrayIcon label="花">
                    <g fill="#f4b6b6" stroke="#c77" strokeWidth="0.500">
                        <circle cx="9" cy="5" r="3" />
                        <circle cx="5" cy="8" r="3" />
                        <circle cx="13" cy="8" r="3" />
                        <circle cx="6.500" cy="12.500" r="3" />
                        <circle cx="11.500" cy="12.500" r="3" />
                    </g>
                    <circle cx="9" cy="9" r="1.500" fill="#c0504d" stroke="none" />
                </TrayIcon>
                <TrayIcon label="助手">
                    <rect x="1" y="2" width="16" height="15" rx="5" fill="#f08a1c" stroke="none" />
                    <circle cx="4" cy="4" r="2" fill="#ffc35c" stroke="none" />
                    <circle cx="14" cy="4" r="2" fill="#ffc35c" stroke="none" />
                    <path d="M13 7c-2-3-8-2-8 2s6 5 8 2" stroke="#fff4d8" strokeWidth="2" />
                </TrayIcon>
                <TrayIcon label="USB">
                    <g stroke="#ffffff">
                        <path d="M5.500 5V1.500h5V5M11 16.500H3.500v-11h9V11M7 3h2" />
                        <path d="M11 14l2 2 4-5" />
                    </g>
                </TrayIcon>
                <TrayIcon label="HP">
                    <circle cx="9" cy="9" r="8" fill="#0b9ad8" stroke="none" />
                    <LogoText x="9" y="13" $size={11} $italic $weight={500} $color="#ffffff">hp</LogoText>
                </TrayIcon>
                <TrayIcon label="OneDrive">
                    <path d="M3 14c-4-1-2-6 1-6 1-5 8-5 9-1 4 0 5 6 2 7z" fill="#8b929c" stroke="none" />
                    <path d="M2 3l14 13" stroke="#ffffff" />
                </TrayIcon>
                <TrayIcon label="网络">
                    <path d="M5 4.500h12v8H5M11 12.500v3M8 15.500h6M1.500 3.500h5v4h-5zM4 7.500v7" stroke="#ffffff" />
                </TrayIcon>
                <TrayIcon label="音量">
                    <path d="M2 7h3l4-4v12l-4-4H2zM11 7c1 1 1 3 0 4M13 5c2 2 2 6 0 8M15 3c3 3 3 9 0 12" stroke="#ffffff" />
                </TrayIcon>
                <TrayIcon label="麦克风">
                    <rect x="6" y="1" width="6" height="11" rx="2" fill="#ffffff" stroke="none" />
                    <path d="M4 9v2c0 4 10 4 10 0V9M9 14v3M6 16.500h6" stroke="#ffffff" />
                </TrayIcon>
                <TrayItem>中</TrayItem>
                <TrayItem $width={34}><Pinyin>拼</Pinyin></TrayItem>
                <Clock>
                    <time>8:26</time>
                    <time>2023/1</time>
                </Clock>
            </Tray>
        </Taskbar>
    );
}

function App() {
    return (
        <Page>
            <GlobalStyle />
            <Title />
            <TabBar>
                <ActiveTab aria-label="常用" />
                {tabs.map((tab) => (
                    <RibbonTab key={tab}>{tab}</RibbonTab>
                ))}
                <RibbonToggle aria-label="最小化功能区">
                    <span>
                        <Svg width="6" height="4" viewBox="0 0 6 4"><path d="M0 4l3-4 3 4z" fill="#333" stroke="none" /></Svg>
                    </span>
                    <Caret $size={2} $color="#e6e6e6" />
                </RibbonToggle>
            </TabBar>
            <RibbonPanels />
            <Bevel $height={7} $lined />
            <DrawingArea />
            <LayoutBar>
                <LayoutTab $dark $width={21} $pad={1}>型</LayoutTab>
                <LayoutTab $width={46} $pad={7}>布局1</LayoutTab>
            </LayoutBar>
            <Bevel $height={4} />
            <History />
            <CommandInput aria-label="命令行" defaultValue="定插入基点:" />
            <Status />
            <WindowsBar />
        </Page>
    );
}

export default App;
